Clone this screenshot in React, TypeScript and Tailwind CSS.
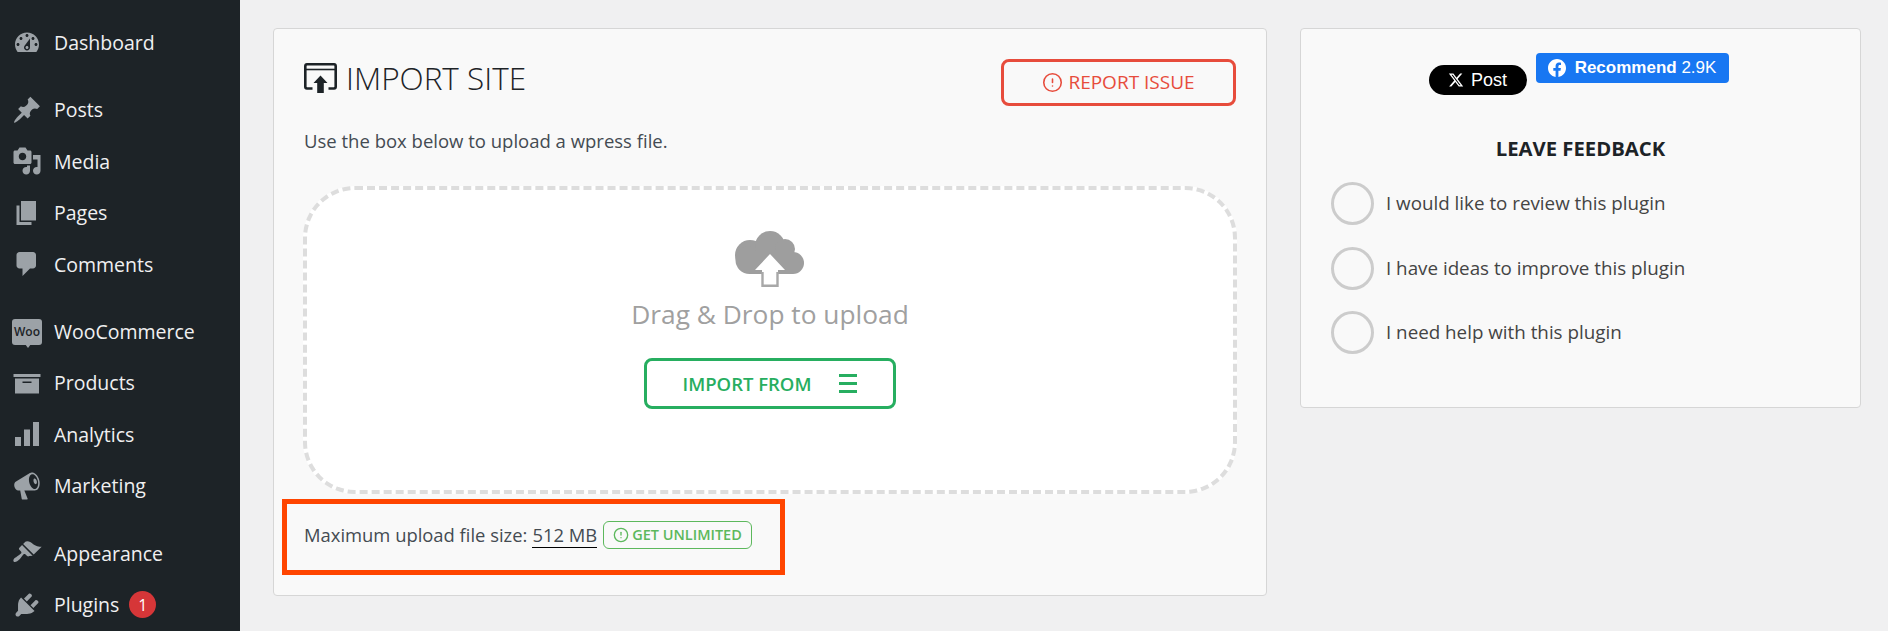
import { AlertCircle } from "lucide-react";

const FONT = "font-['Open_Sans','Noto_Sans',sans-serif]";

const ICONS = {
  dashboard:
    "M3.76 16h12.48c1.1-1.37 1.76-3.11 1.76-5 0-4.42-3.58-8-8-8s-8 3.58-8 8c0 1.89.66 3.63 1.76 5zM10 4c.55 0 1 .45 1 1s-.45 1-1 1-1-.45-1-1 .45-1 1-1zM6 6c.55 0 1 .45 1 1s-.45 1-1 1-1-.45-1-1 .45-1 1-1zm8 0c.55 0 1 .45 1 1s-.45 1-1 1-1-.45-1-1 .45-1 1-1zm-5.37 5.55L12 7v6c0 1.1-.9 2-2 2s-2-.9-2-2c0-.57.24-1.08.63-1.45zM4 10c.55 0 1 .45 1 1s-.45 1-1 1-1-.45-1-1 .45-1 1-1zm12 0c.55 0 1 .45 1 1s-.45 1-1 1-1-.45-1-1 .45-1 1-1zm-5 3c0-.55-.45-1-1-1s-1 .45-1 1 .45 1 1 1 1-.45 1-1z",
  posts:
    "M10.44 3.02l1.82-1.82 6.36 6.35-1.83 1.82c-1.05-.68-2.48-.57-3.41.36l-.75.75c-.92.93-1.04 2.35-.35 3.41l-1.83 1.82-2.41-2.41-2.8 2.79c-.42.42-3.38 2.71-3.8 2.29s1.86-3.39 2.28-3.81l2.79-2.79L4.1 9.36l1.83-1.82c1.05.69 2.48.57 3.4-.36l.75-.75c.93-.92 1.05-2.35.36-3.41z",
  media:
    "M13 11V4c0-.55-.45-1-1-1h-1.67L9 1H5L3.67 3H2c-.55 0-1 .45-1 1v7c0 .55.45 1 1 1h10c.55 0 1-.45 1-1zM7 4.5c1.38 0 2.5 1.12 2.5 2.5S8.38 9.5 7 9.5 4.5 8.38 4.5 7 5.62 4.5 7 4.5zM14 6h5v10.5c0 1.38-1.12 2.5-2.5 2.5S14 17.88 14 16.5s1.12-2.5 2.5-2.5c.17 0 .34.02.5.05V9h-3V6zm-4 8.05V13h2v3.5c0 1.38-1.12 2.5-2.5 2.5S7 17.88 7 16.5 8.12 14 9.5 14c.17 0 .34.02.5.05z",
  pages: "M6 15V2h10v13H6zm-1 1h8v2H3V5h2v11z",
  comments:
    "M5 2h9c1.1 0 2 .9 2 2v7c0 1.1-.9 2-2 2h-2l-5 5v-5H5c-1.1 0-2-.9-2-2V4c0-1.1.9-2 2-2z",
  products: "M19 4v2H1V4h18zM2 7h16v10H2V7zm11 3V9H7v1h6z",
  analytics: "M18 18V2h-4v16h4zm-6 0V7H8v11h4zm-6 0v-6H2v6h4z",
  marketing:
    "M18.15 5.94c.46 1.62.38 3.22-.02 4.48-.42 1.28-1.26 2.18-2.3 2.48-.16.06-.26.06-.4.06-.06.02-.12.02-.18.02-.06.02-.14.02-.22.02h-6.8l2.22 5.5c.02.14-.06.26-.14.34-.08.1-.24.16-.34.16H6.95c-.1 0-.26-.06-.34-.16-.08-.08-.16-.2-.14-.34l-1-5.5H4.25l-.02-.02c-.5.06-1.08-.18-1.54-.62s-.88-1.08-1.06-1.88c-.24-.8-.2-1.56-.02-2.2.18-.62.58-1.08 1.06-1.3l.02-.02 9-5.4c.1-.06.18-.1.24-.16.06-.04.14-.08.24-.12.16-.08.28-.12.5-.18 1.04-.3 2.24.1 3.22 1 .98.88 1.84 2.24 2.26 3.86zm-2.58 5.98h-.02c.4-.1.74-.34 1.04-.7.58-.7.86-1.76.86-3.04 0-.64-.1-1.3-.28-1.98-.34-1.36-1.02-2.5-1.78-3.24-.38-.38-.8-.64-1.22-.78-.18-.06-.34-.08-.52-.08-.16 0-.32.02-.48.06-.38.1-.72.34-1 .7-.6.7-.88 1.76-.88 3.04 0 .64.08 1.3.26 1.98.34 1.36 1.02 2.5 1.8 3.24.76.74 1.62 1.12 2.22.8zm-.64-6.88c.52-.14 1.3.52 1.58 1.56.26 1.04 0 2-.52 2.14-.52.14-1.3-.52-1.58-1.56-.26-1.04 0-2 .52-2.14z",
  appearance:
    "M14.48 11.06L7.41 3.99l1.5-1.5c.5-.56 2.3-.47 3.51.32 1.21.8 1.43 1.28 2.91 2.1 1.18.64 2.45 1.26 4.45.85zm-.71.71L6.7 4.7 4.93 6.47c-.39.39-.39 1.02 0 1.41l1.06 1.06c.39.39.39 1.03 0 1.42-.6.6-1.43 1.11-2.21 1.69-.35.26-.7.53-1.01.84C1.43 13.23.4 14.96 1.2 15.8c.8.79 2.52-.24 3.87-1.6.31-.31.58-.66.84-1.01.58-.78 1.09-1.61 1.69-2.21.39-.39 1.03-.39 1.42 0l1.06 1.06c.39.39 1.02.39 1.41 0z",
  plugins:
    "M13.11 4.36L9.87 7.6 8 5.73l3.24-3.24c.35-.34 1.05-.2 1.56.32.52.51.66 1.21.31 1.55zm-8 1.77l.91-1.12 9.01 9.01-1.19.84c-.71.71-2.63 1.16-3.82 1.16H6.14L4.9 17.26c-.59.59-1.54.59-2.12 0-.59-.58-.59-1.53 0-2.12l1.24-1.24v-3.88c0-1.13.4-3.19 1.09-3.89zm7.26 3.97l3.24-3.24c.34-.35 1.04-.21 1.55.31.52.51.66 1.21.31 1.55l-3.24 3.25z",
};

function MenuItem({ icon, label, badge }: { icon: string; label: string; badge?: string }) {
  return (
    <div className="flex h-[51.4px] shrink-0 items-center pl-[12px]">
      <svg viewBox="0 0 20 20" className="h-[30px] w-[30px] shrink-0 fill-[#9ca2a7]">
        <path d={icon} />
      </svg>
      <span className="ml-[12px] text-[19.5px] text-[#f0f0f1]">{label}</span>
      {badge && (
        <span className="ml-[10px] flex h-[27px] w-[27px] items-center justify-center rounded-full bg-[#d63638] text-[16px] text-white">
          {badge}
        </span>
      )}
    </div>
  );
}

function WooItem() {
  return (
    <div className="flex h-[51.4px] shrink-0 items-center pl-[12px]">
      <div className="relative flex h-[26px] w-[30px] shrink-0 items-center justify-center rounded-[3px] bg-[#9ca2a7]">
        <span className="text-[12px] font-semibold leading-none text-[#1d2327]">Woo</span>
        <span className="absolute bottom-[-3px] left-[13px] h-0 w-0 border-x-[3px] border-t-[4px] border-x-transparent border-t-[#9ca2a7]" />
      </div>
      <span className="ml-[12px] text-[19.5px] text-[#f0f0f1]">WooCommerce</span>
    </div>
  );
}

function Sidebar() {
  return (
    <aside className="flex h-[631px] w-[240px] shrink-0 flex-col overflow-hidden bg-[#1d2327] pt-[17px]">
      <MenuItem icon={ICONS.dashboard} label="Dashboard" />
      <div className="h-[16px] shrink-0" />
      <MenuItem icon={ICONS.posts} label="Posts" />
      <MenuItem icon={ICONS.media} label="Media" />
      <MenuItem icon={ICONS.pages} label="Pages" />
      <MenuItem icon={ICONS.comments} label="Comments" />
      <div className="h-[16px] shrink-0" />
      <WooItem />
      <MenuItem icon={ICONS.products} label="Products" />
      <MenuItem icon={ICONS.analytics} label="Analytics" />
      <MenuItem icon={ICONS.marketing} label="Marketing" />
      <div className="h-[16px] shrink-0" />
      <MenuItem icon={ICONS.appearance} label="Appearance" />
      <MenuItem icon={ICONS.plugins} label="Plugins" badge="1" />
    </aside>
  );
}

function ImportIcon() {
  return (
    <svg viewBox="0 0 33 30" className="h-[30px] w-[33px] shrink-0">
      <path
        d="M8.500 25.500H3A1.800 1.800 0 0 1 1.300 23.700V3A1.800 1.800 0 0 1 3 1.300H30A1.800 1.800 0 0 1 31.700 3V23.700A1.800 1.800 0 0 1 30 25.500H24.500"
        fill="none"
        stroke="#1d2327"
        strokeWidth="2.600"
      />
      <path d="M2 6.500H31" stroke="#1d2327" strokeWidth="1.600" />
      <path d="M16.500 12.500L23.500 20H19.800V30H13.200V20H9.500Z" fill="#1d2327" />
    </svg>
  );
}

function CloudIcon() {
  return (
    <svg viewBox="0 0 70 56" className="h-[56px] w-[70px]">
      <g fill="#9e9e9e">
        <circle cx="15" cy="24" r="15" />
        <circle cx="14.500" cy="29" r="14" />
        <circle cx="35" cy="15" r="15" />
        <circle cx="50" cy="18" r="10" />
        <circle cx="58" cy="32" r="11" />
        <rect x="14" y="20" width="44" height="23" />
      </g>
      <path d="M35 23L20 39H27V55H43V39H50Z" fill="#fff" />
      <path d="M27.500 41V54.800H42.500V41" fill="none" stroke="#a8a8a8" strokeWidth="2.400" />
    </svg>
  );
}

function ImportCard() {
  return (
    <section className="h-[568px] w-[994px] shrink-0 rounded-[4px] border border-[#d6d6d6] bg-[#f9f9f9] pl-[30px] pr-[30px] pt-[30px]">
      <div className="flex items-start justify-between">
        <div className="mt-[2px] flex items-center gap-[9px]">
          <ImportIcon />
          <h1 className="text-[31.500px] font-light leading-[34px] text-[#1d2327]">IMPORT SITE</h1>
        </div>
        <button className="flex h-[47px] w-[235px] items-center justify-center gap-[5px] rounded-[8px] border-[3px] border-[#e74c3c] text-[19px] font-medium text-[#e74c3c]">
          <AlertCircle className="h-[21px] w-[21px]" strokeWidth={1.8} />
          REPORT ISSUE
        </button>
      </div>
      <p className="mt-[23px] text-[18.500px] leading-[24px] text-[#444b52]">
        Use the box below to upload a wpress file.
      </p>
      <div className="mt-[33px] ml-[-1px] flex h-[308px] w-[934px] flex-col items-center rounded-[52px] border-[4px] border-dashed border-[#dddddd] bg-white pt-[41px]">
        <CloudIcon />
        <p className="mt-[10px] text-[26.300px] leading-[34px] text-[#a0a0a0]">Drag &amp; Drop to upload</p>
        <button className="mt-[27px] flex h-[51px] w-[252px] items-center justify-center gap-[28px] rounded-[8px] border-[3px] border-[#27ae60] text-[18.500px] font-semibold text-[#27ae60]">
          IMPORT FROM
          <span className="flex w-[18px] flex-col gap-[5px]">
            <span className="h-[3px] bg-[#27ae60]" />
            <span className="h-[3px] bg-[#27ae60]" />
            <span className="h-[3px] bg-[#27ae60]" />
          </span>
        </button>
      </div>
      <div className="ml-[-22px] mt-[5px] flex h-[76px] w-[503px] items-center border-[5px] border-[#ff4500] pb-[4px] pl-[17px]">
        <span className="text-[18.400px] text-[#444b52]">Maximum upload file size:</span>
        <span className="ml-[5px] border-b border-black text-[18.400px] leading-[25px] text-[#444b52]">512 MB</span>
        <span className="ml-[6px] flex h-[28px] items-center gap-[3px] rounded-[6px] border border-[#5cb85c] px-[9px] text-[14.500px] font-semibold text-[#5cb85c]">
          <AlertCircle className="h-[16px] w-[16px]" strokeWidth={2} />
          GET UNLIMITED
        </span>
      </div>
    </section>
  );
}

function SocialButtons() {
  return (
    <div className="flex h-[63px] items-start justify-center pr-[4px] font-['Liberation_Sans',sans-serif]">
      <div className="mt-[12px] flex h-[30px] w-[98px] items-center justify-center gap-[7px] rounded-[15px] bg-black text-[18px] text-white">
        <svg viewBox="0 0 24 24" className="h-[16px] w-[16px] fill-white">
          <path d="M18.244 2.25h3.308l-7.227 8.26 8.502 11.24H16.17l-5.214-6.817L4.99 21.75H1.68l7.730-8.835L1.254 2.25H8.080l4.713 6.231zm-1.161 17.52h1.833L7.084 4.126H5.117z" />
        </svg>
        Post
      </div>
      <div className="ml-[9px] flex h-[30px] w-[193px] items-center justify-center gap-[9px] rounded-[4px] bg-[#1877f2] text-[17px] text-white">
        <svg viewBox="0 0 24 24" className="h-[18px] w-[18px] fill-white">
          <path d="M24 12.073C24 5.405 18.627 0 12 0S0 5.405 0 12.073c0 6.026 4.388 11.020 10.125 11.927v-8.437H7.078v-3.490h3.047V9.413c0-3.026 1.792-4.697 4.533-4.697 1.312 0 2.686.236 2.686.236v2.970h-1.513c-1.491 0-1.956.930-1.956 1.886v2.265h3.328l-.532 3.490h-2.796V24C19.612 23.093 24 18.100 24 12.073z" />
        </svg>
        <span>
          <span className="font-bold">Recommend</span> 2.9K
        </span>
      </div>
    </div>
  );
}

function FeedbackOption({ label }: { label: string }) {
  return (
    <div className="flex items-center gap-[12px]">
      <span className="h-[43px] w-[43px] shrink-0 rounded-full border-[3px] border-[#cccccc]" />
      <span className="text-[18.800px] text-[#444444]">{label}</span>
    </div>
  );
}

function FeedbackCard() {
  return (
    <section className="h-[380px] w-[561px] shrink-0 rounded-[4px] border border-[#d6d6d6] bg-[#f9f9f9] pt-[24px]">
      <SocialButtons />
      <h2 className="mt-[20px] text-center text-[20.300px] font-bold leading-[24px] text-[#1d2327]">LEAVE FEEDBACK</h2>
      <div className="mt-[22px] flex flex-col gap-[21.500px] pl-[30px]">
        <FeedbackOption label="I would like to review this plugin" />
        <FeedbackOption label="I have ideas to improve this plugin" />
        <FeedbackOption label="I need help with this plugin" />
      </div>
    </section>
  );
}

export default function App() {
  return (
    <div className={`flex h-[631px] w-[1888px] overflow-hidden bg-[#f0f0f1] ${FONT}`}>
      <Sidebar />
      <main className="flex items-start gap-[33px] pl-[33px] pt-[28px]">
        <ImportCard />
        <FeedbackCard />
      </main>
    </div>
  );
}
